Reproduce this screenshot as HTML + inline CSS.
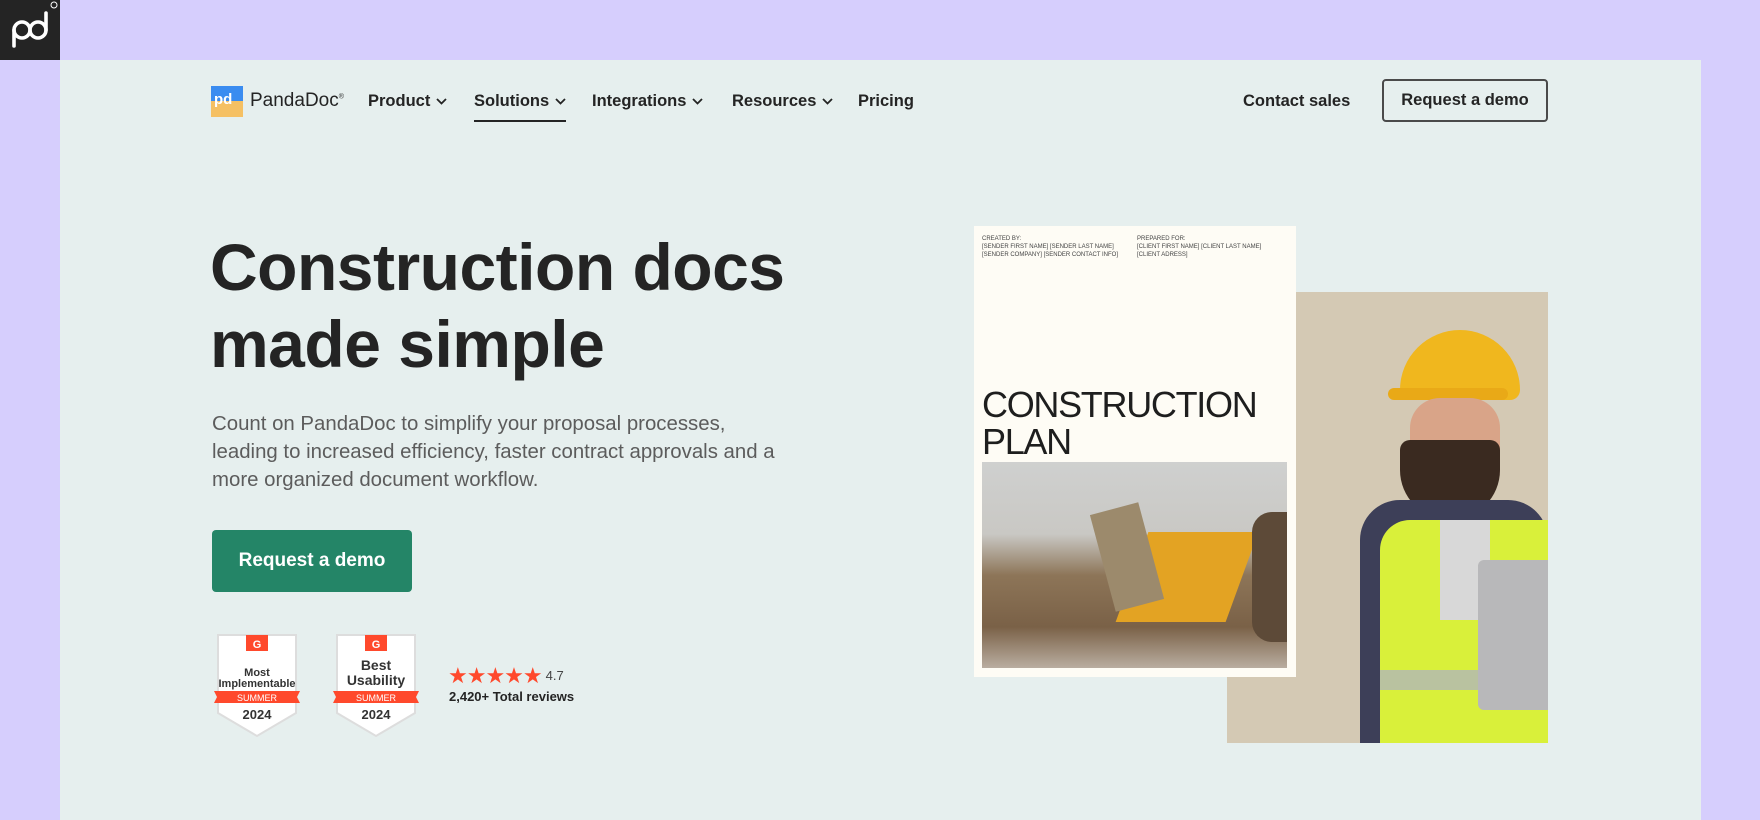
<!DOCTYPE html>
<html><head><meta charset="utf-8"><style>
*{margin:0;padding:0;box-sizing:border-box}
body{width:1760px;height:814px;background:#d6cefd;font-family:"Liberation Sans",sans-serif;position:relative;overflow:hidden;color:#242424}
.abs{position:absolute}
#corner{left:0;top:0;width:60px;height:60px;background:#242424}
#panel{left:60px;top:60px;width:1641px;height:760px;background:#e6efee}
.nav{top:92px;font-size:16.5px;font-weight:bold;color:#242424;white-space:nowrap}
.nav svg{margin-left:6px;vertical-align:middle}
h1{position:absolute;left:210px;top:229px;font-size:66px;line-height:77px;font-weight:bold;letter-spacing:-0.5px;color:#242424}
p.lead{position:absolute;left:212px;top:410px;font-size:20.4px;line-height:28px;color:#5c5c5c;white-space:nowrap}
.btn{left:212px;top:530px;width:200px;height:62px;background:#248567;border-radius:4px;color:#fff;font-weight:bold;font-size:19px;text-align:center;line-height:62px}
.badge{top:634px;width:90px;height:104px}
</style></head><body>
<div class="abs" id="corner"><svg width="60" height="60" viewBox="0 0 60 60"><g fill="none" stroke="#fff" stroke-width="3.6" stroke-linecap="round"><path d="M14 46V30"/><circle cx="22" cy="30" r="8"/><circle cx="38" cy="30" r="8"/><path d="M46 30V13"/></g><circle cx="54" cy="5" r="3" fill="none" stroke="#fff" stroke-width="1"/></svg></div>
<div class="abs" id="panel"></div>

<!-- nav -->
<div class="abs" style="left:211px;top:86px;width:32px;height:31px;background:#f5c063"><div style="height:15px;background:#3a8cf0"></div></div>
<div class="abs" style="left:214px;top:91px;color:#fff;font-weight:bold;font-size:15px">pd</div>
<div class="abs nav" style="left:250px;font-weight:normal;font-size:19px;top:90px">PandaDoc<sup style="font-size:7px">®</sup></div>
<div class="abs nav" style="left:368px">Product<svg width="11" height="7"><path d="M1 1l4.5 4.5L10 1" stroke="#242424" stroke-width="1.8" fill="none"/></svg></div>
<div class="abs nav" style="left:474px">Solutions<svg width="11" height="7"><path d="M1 1l4.5 4.5L10 1" stroke="#242424" stroke-width="1.8" fill="none"/></svg></div>
<div class="abs" style="left:474px;top:120px;width:92px;height:2px;background:#242424"></div>
<div class="abs nav" style="left:592px">Integrations<svg width="11" height="7"><path d="M1 1l4.5 4.5L10 1" stroke="#242424" stroke-width="1.8" fill="none"/></svg></div>
<div class="abs nav" style="left:732px">Resources<svg width="11" height="7"><path d="M1 1l4.5 4.5L10 1" stroke="#242424" stroke-width="1.8" fill="none"/></svg></div>
<div class="abs nav" style="left:858px">Pricing</div>
<div class="abs nav" style="left:1243px">Contact sales</div>
<div class="abs" style="left:1382px;top:79px;width:166px;height:43px;border:2px solid #4a4a4a;border-radius:4px;font-weight:bold;font-size:16.5px;text-align:center;line-height:39px">Request a demo</div>

<h1>Construction docs<br>made simple</h1>
<p class="lead">Count on PandaDoc to simplify your proposal processes,<br>leading to increased efficiency, faster contract approvals and a<br>more organized document workflow.</p>
<div class="abs btn">Request a demo</div>

<!-- badges -->
<svg class="abs badge" style="left:212px" viewBox="0 0 90 104"><path d="M6 1h78v78L45 102 6 79z" fill="#fff" stroke="#ddd" stroke-width="2"/><rect x="34" y="1" width="22" height="16" fill="#ff492c"/><text x="45" y="14" fill="#fff" font-size="11" font-weight="bold" text-anchor="middle" font-family="Liberation Sans">G</text><text x="45" y="42" font-size="11" font-weight="bold" text-anchor="middle" fill="#333" font-family="Liberation Sans">Most</text><text x="45" y="53" font-size="11" font-weight="bold" text-anchor="middle" fill="#333" font-family="Liberation Sans">Implementable</text><path d="M2 57h86l-3 6 3 6H2l3-6z" fill="#ff492c"/><text x="45" y="67" font-size="9" text-anchor="middle" fill="#fff" font-family="Liberation Sans">SUMMER</text><text x="45" y="85" font-size="13" font-weight="bold" text-anchor="middle" fill="#333" font-family="Liberation Sans">2024</text></svg>
<svg class="abs badge" style="left:331px" viewBox="0 0 90 104"><path d="M6 1h78v78L45 102 6 79z" fill="#fff" stroke="#ddd" stroke-width="2"/><rect x="34" y="1" width="22" height="16" fill="#ff492c"/><text x="45" y="14" fill="#fff" font-size="11" font-weight="bold" text-anchor="middle" font-family="Liberation Sans">G</text><text x="45" y="36" font-size="14" font-weight="bold" text-anchor="middle" fill="#333" font-family="Liberation Sans">Best</text><text x="45" y="51" font-size="14" font-weight="bold" text-anchor="middle" fill="#333" font-family="Liberation Sans">Usability</text><path d="M2 57h86l-3 6 3 6H2l3-6z" fill="#ff492c"/><text x="45" y="67" font-size="9" text-anchor="middle" fill="#fff" font-family="Liberation Sans">SUMMER</text><text x="45" y="85" font-size="13" font-weight="bold" text-anchor="middle" fill="#333" font-family="Liberation Sans">2024</text></svg>
<div class="abs" style="left:448px;top:663px;color:#ff492c;font-size:22px;letter-spacing:-1px">★★★★★<span style="color:#444;font-size:13px;letter-spacing:0;margin-left:4px;vertical-align:3px">4.7</span></div>
<div class="abs" style="left:449px;top:689px;font-size:13px;font-weight:bold;color:#242424">2,420+ Total reviews</div>

<!-- right visuals -->
<div class="abs" style="left:1227px;top:292px;width:321px;height:451px;background:#d4c9b4"></div>
<div class="abs" style="left:974px;top:226px;width:322px;height:451px;background:#fefcf5">
  <div class="abs" style="left:8px;top:9px;font-size:6px;line-height:8px;color:#444">CREATED BY:<br>[SENDER FIRST NAME] [SENDER LAST NAME]<br>[SENDER COMPANY] [SENDER CONTACT INFO]</div>
  <div class="abs" style="left:163px;top:9px;font-size:6px;line-height:8px;color:#444">PREPARED FOR:<br>[CLIENT FIRST NAME] [CLIENT LAST NAME]<br>[CLIENT ADRESS]</div>
  <div class="abs" style="left:8px;top:160px;font-size:36px;line-height:37px;color:#1e1e1e;letter-spacing:-1.3px">CONSTRUCTION<br>PLAN</div>
  <div class="abs" style="left:8px;top:236px;width:305px;height:206px;background:linear-gradient(#cfd0cf 0%,#c9c8c4 35%,#8d7558 55%,#7a6147 80%,#b9ada0 100%)">
    <div class="abs" style="left:150px;top:70px;width:110px;height:90px;background:#e3a323;transform:skewX(-20deg)"></div>
    <div class="abs" style="left:120px;top:45px;width:50px;height:100px;background:#9c8a6c;transform:rotate(-15deg)"></div>
    <div class="abs" style="left:270px;top:50px;width:35px;height:130px;background:#5d4a38;border-radius:20px 0 0 20px"></div>
  </div>
</div>
<!-- worker -->
<div class="abs" style="left:1400px;top:330px;width:120px;height:70px;background:#f0b71e;border-radius:60px 60px 10px 10px"></div>
<div class="abs" style="left:1388px;top:388px;width:120px;height:12px;background:#e9a917;border-radius:6px"></div>
<div class="abs" style="left:1410px;top:398px;width:90px;height:110px;background:#d9a488;border-radius:30px 30px 40px 40px"></div>
<div class="abs" style="left:1400px;top:440px;width:100px;height:80px;background:#3a2a20;border-radius:10px 10px 50px 50px"></div>
<div class="abs" style="left:1360px;top:500px;width:188px;height:243px;background:#3d3f58;border-radius:40px 40px 0 0"></div>
<div class="abs" style="left:1380px;top:520px;width:168px;height:223px;background:#d9f03a;border-radius:30px 0 0 0"></div>
<div class="abs" style="left:1440px;top:520px;width:50px;height:100px;background:#d8d8d8"></div>
<div class="abs" style="left:1380px;top:670px;width:168px;height:20px;background:#b9c2a0"></div>
<div class="abs" style="left:1478px;top:560px;width:70px;height:150px;background:#b8b8ba;border-radius:6px 0 0 6px"></div>
</body></html>
